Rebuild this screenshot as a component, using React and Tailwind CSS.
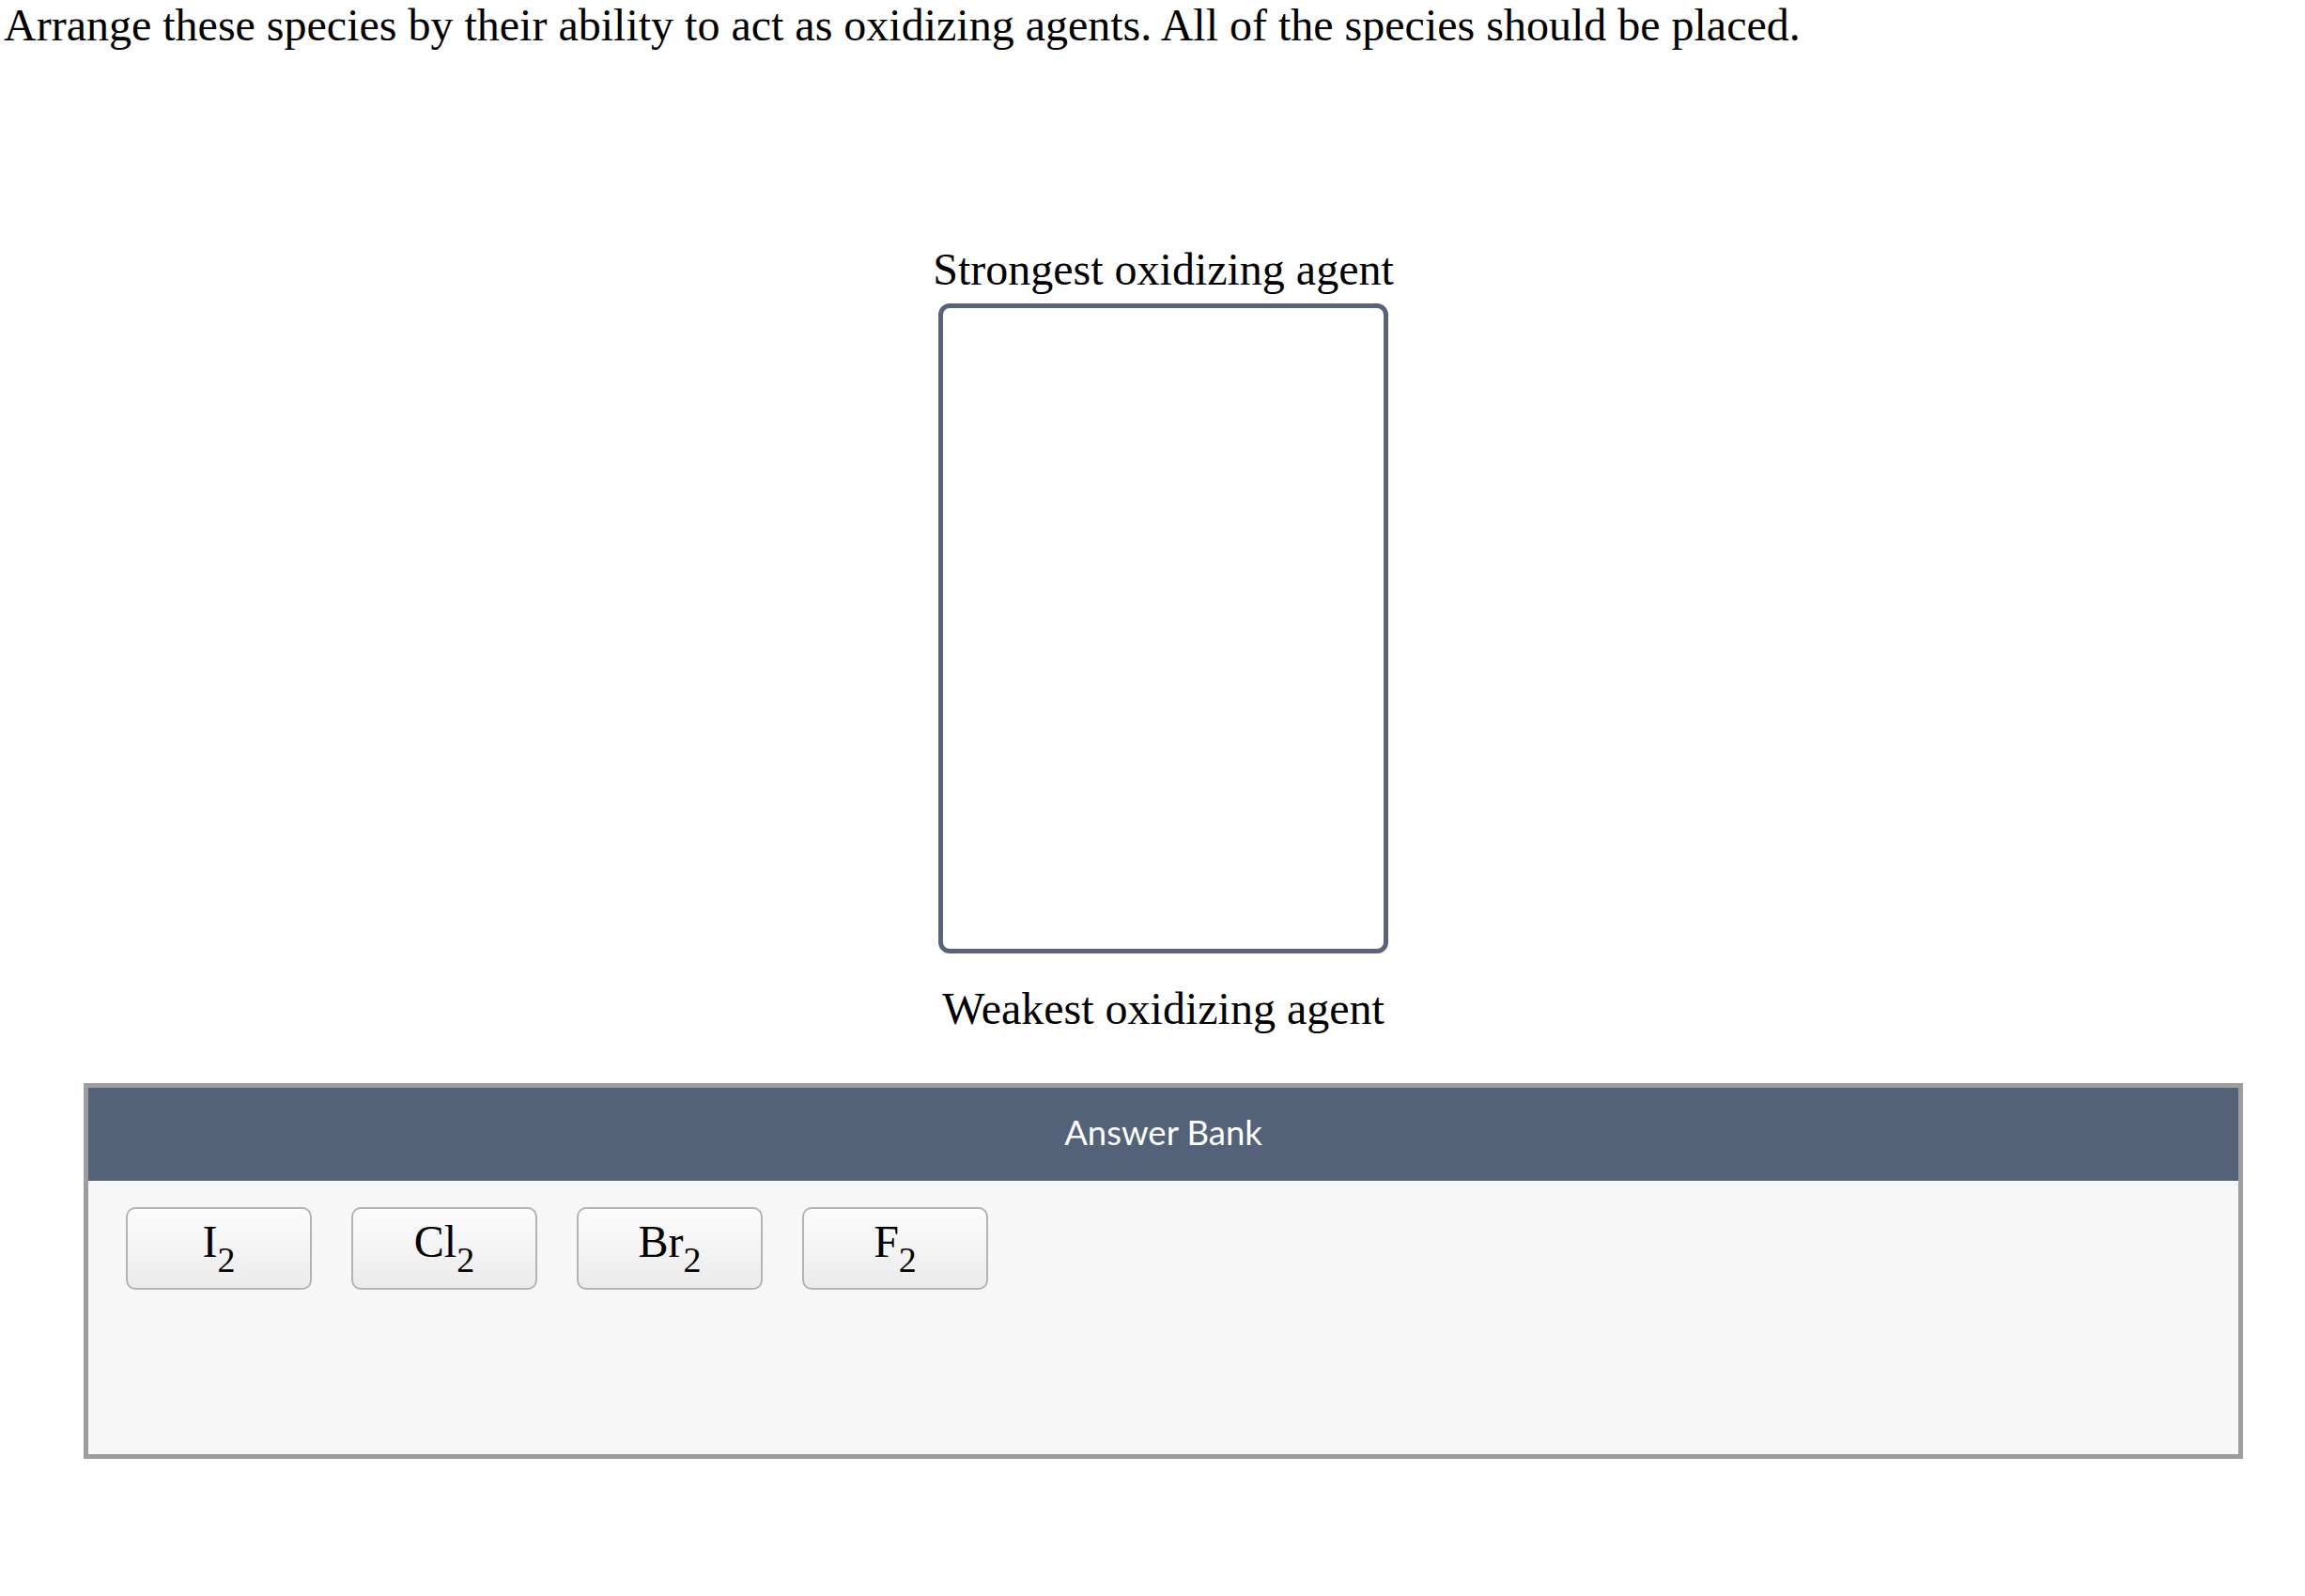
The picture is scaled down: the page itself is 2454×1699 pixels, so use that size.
export default function App() {
  const serif = "font-['Liberation_Serif','Times_New_Roman',serif]";
  const items = [
    ["I", "2"],
    ["Cl", "2"],
    ["Br", "2"],
    ["F", "2"],
  ];
  return (
    <div className={`w-[2454px] min-h-[1699px] bg-white text-black ${serif}`}>
      <p className="pl-[4px] text-[48px] leading-[54px]">
        Arrange these species by their ability to act as oxidizing agents. All of the species should be placed.
      </p>
      <div className="ml-[89px] w-[2299px]">
        <div className="mt-[206px] flex flex-col items-center">
          <div className="text-[48px] leading-[54px]">Strongest oxidizing agent</div>
          <div className="mt-[9px] w-[479px] h-[692px] border-[5px] border-[#56637a] rounded-[12px] bg-white" />
          <div className="mt-[32px] text-[48px] leading-[54px]">Weakest oxidizing agent</div>
        </div>
        <div className="mt-[52px] h-[400px] border-[5px] border-[#9d9d9d] bg-[#f7f7f7] flex flex-col">
          <div className="h-[99px] shrink-0 bg-[#536279] flex items-center justify-center text-white text-[36.5px] font-['Lato','Open_Sans',sans-serif]">
            <span className="-mt-[4px]">Answer Bank</span>
          </div>
          <div className="pt-[28px] pl-[40px] flex gap-[42px]">
            {items.map(([el, n]) => (
              <div
                key={el}
                className="w-[198px] h-[88px] rounded-[10px] border-2 border-[#b4b4b4] bg-linear-to-b from-[#fcfcfc] to-[#ebebeb] flex items-center justify-center"
              >
                <span className="text-[48px] leading-[54px] -mt-[12px]">
                  {el}
                  <span className="relative top-[16px] text-[38px]">{n}</span>
                </span>
              </div>
            ))}
          </div>
        </div>
      </div>
    </div>
  );
}
